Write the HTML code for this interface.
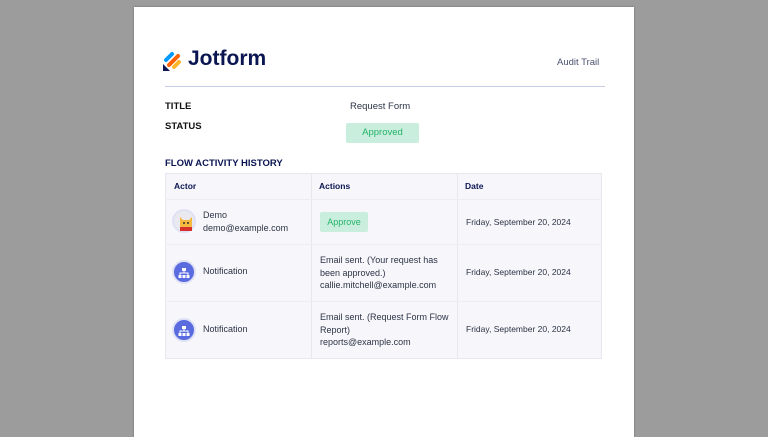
<!DOCTYPE html><html><head><style>
body{margin:0;width:768px;height:432px;background:#9c9c9c;position:relative;overflow:hidden;font-family:"Liberation Sans",sans-serif;color:#2c3345}
.pg{position:absolute;left:134px;top:7px;width:500px;height:430px;background:#fff;box-shadow:0 0 2px rgba(0,0,0,.3)}
.a{position:absolute;font-size:9.5px;white-space:nowrap}
.b{font-weight:bold;color:#0a1551}
.t{position:absolute;left:165px;top:173px;width:437px;height:186px;background:#f7f7fb;border:1px solid #e6e7ef;box-sizing:border-box}
.hl{position:absolute;height:1px;background:#eceef4;left:165px;width:437px}
.vl{position:absolute;width:1px;background:#e6e7ef;top:173px;height:186px}
.av{position:absolute;left:172px;width:24px;height:24px;border-radius:50%;background:#5a6be0;border:2px solid #dfe2f5;box-sizing:border-box}
.av svg{position:absolute;left:4px;top:4px}
</style></head><body>
<div class="pg"></div>
<svg style="position:absolute;left:162px;top:50px" width="22" height="22" viewBox="0 0 22 22">
<line x1="4" y1="10" x2="10" y2="4" stroke="#0099ff" stroke-width="4" stroke-linecap="round"/>
<line x1="7" y1="15" x2="16" y2="6" stroke="#ff6100" stroke-width="4" stroke-linecap="round"/>
<line x1="12" y1="17" x2="17" y2="12" stroke="#ffb629" stroke-width="4" stroke-linecap="round"/>
<path d="M1 14v7h7z" fill="#0a1551"/></svg>
<div class="a" style="left:188px;top:47px;font-size:21px;font-weight:bold;color:#0a1551">Jotform</div>
<div class="a" style="left:557px;top:57px;color:#4a5170">Audit Trail</div>
<div style="position:absolute;left:165px;top:86px;width:440px;height:1px;background:#c8cbe6"></div>
<div class="a b" style="left:165px;top:101px;color:#111">TITLE</div>
<div class="a" style="left:350px;top:101px">Request Form</div>
<div class="a b" style="left:165px;top:121px;color:#111">STATUS</div>
<div style="position:absolute;left:346px;top:123px;width:73px;height:20px;background:#caeedd;border-radius:2px;color:#23b36a;font-size:9.5px;text-align:center;line-height:20px">Approved</div>
<div class="a b" style="left:165px;top:158px">FLOW ACTIVITY HISTORY</div>
<div class="t"></div>
<div class="vl" style="left:311px"></div><div class="vl" style="left:457px"></div>
<div class="hl" style="top:199px"></div><div class="hl" style="top:244px"></div><div class="hl" style="top:301px"></div>
<div class="a b" style="left:174px;top:181px;font-size:8.5px">Actor</div>
<div class="a b" style="left:319px;top:181px;font-size:8.5px">Actions</div>
<div class="a b" style="left:465px;top:181px;font-size:8.5px">Date</div>
<div class="av" style="top:209px;background:#e9e9ef"><svg width="16" height="16" viewBox="0 0 16 16"><path d="M2 2l3 3h6l3-3v8a6 6 0 0 1-12 0z" fill="#f4b93e"/><path d="M2 12h12v4H2z" fill="#d8312c"/><circle cx="6" cy="8" r="1" fill="#333"/><circle cx="10" cy="8" r="1" fill="#333"/></svg></div>
<div class="a" style="left:203px;top:209px;font-size:9px;line-height:13px">Demo<br>demo@example.com</div>
<div style="position:absolute;left:320px;top:212px;width:48px;height:20px;background:#caeedd;border-radius:2px;color:#23b36a;font-size:9px;text-align:center;line-height:20px">Approve</div>
<div class="a" style="left:466px;top:217px;font-size:8.5px">Friday, September 20, 2024</div>
<div class="av" style="top:260px"><svg width="12" height="12" viewBox="0 0 12 12" style="left:4px;top:5px"><rect x="4" y="1" width="4" height="3" fill="#fff"/><path d="M6 4v2M2 8V6h8v2" stroke="#fff" fill="none"/><rect x="0.5" y="8" width="3" height="3" fill="#fff"/><rect x="4.5" y="8" width="3" height="3" fill="#fff"/><rect x="8.5" y="8" width="3" height="3" fill="#fff"/></svg></div>
<div class="a" style="left:203px;top:266px;font-size:9px">Notification</div>
<div class="a" style="left:320px;top:254px;font-size:9px;line-height:12.5px">Email sent. (Your request has<br>been approved.)<br>callie.mitchell@example.com</div>
<div class="a" style="left:466px;top:267px;font-size:8.5px">Friday, September 20, 2024</div>
<div class="av" style="top:318px"><svg width="12" height="12" viewBox="0 0 12 12" style="left:4px;top:5px"><rect x="4" y="1" width="4" height="3" fill="#fff"/><path d="M6 4v2M2 8V6h8v2" stroke="#fff" fill="none"/><rect x="0.5" y="8" width="3" height="3" fill="#fff"/><rect x="4.5" y="8" width="3" height="3" fill="#fff"/><rect x="8.5" y="8" width="3" height="3" fill="#fff"/></svg></div>
<div class="a" style="left:203px;top:324px;font-size:9px">Notification</div>
<div class="a" style="left:320px;top:311px;font-size:9px;line-height:12.5px">Email sent. (Request Form Flow<br>Report)<br>reports@example.com</div>
<div class="a" style="left:466px;top:324px;font-size:8.5px">Friday, September 20, 2024</div>
</body></html>
